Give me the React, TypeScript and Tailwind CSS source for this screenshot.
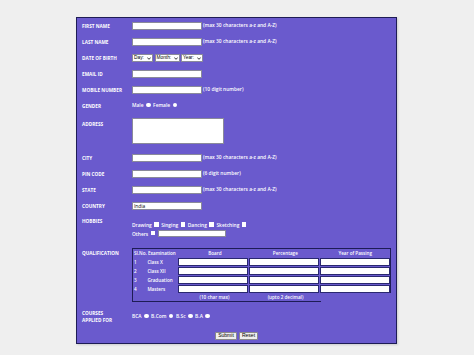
import React from "react";

const font = { fontFamily: '"Open Sans", "Liberation Sans", sans-serif' };

function Label({ children }: { children: React.ReactNode }) {
  return <div className="w-[50px] shrink-0 text-[4.7px] font-bold uppercase leading-[7px] text-white">{children}</div>;
}

function TextBox({ value = "", w = "w-[70px]" }: { value?: string; w?: string }) {
  return (
    <div className={`${w} h-[8px] border border-[#8a8a9a] bg-white px-[1px] text-[4.8px] leading-[6px] text-black`}>
      {value}
    </div>
  );
}

function Hint({ children }: { children: React.ReactNode }) {
  return <span className="ml-[1px] text-[4.9px] font-semibold text-white">{children}</span>;
}

function Select({ text, w }: { text: string; w: string }) {
  return (
    <div className={`${w} flex h-[8px] items-center justify-between border border-[#8a8a9a] bg-white px-[1px] text-[4.8px] leading-[6px] text-black`}>
      <span style={{ fontFamily: '"Liberation Sans", sans-serif' }}>{text}</span>
      <svg width="4" height="3" viewBox="0 0 4 3">
        <path d="M0.3 0.5 L2 2.3 L3.7 0.5" fill="none" stroke="#222" strokeWidth="0.9" />
      </svg>
    </div>
  );
}

const Radio = () => <span className="mx-[2.5px] mb-[1.5px] inline-block h-[4.5px] w-[4.5px] rounded-full bg-white" />;
const Check = () => <span className="mx-[2.5px] mb-[1px] inline-block h-[4.5px] w-[4.5px] bg-white" />;

function Row({ label, h = "h-[16px]", children }: { label: React.ReactNode; h?: string; children?: React.ReactNode }) {
  return (
    <div className={`flex ${h} items-center`}>
      <Label>{label}</Label>
      <div className="flex items-center">{children}</div>
    </div>
  );
}

const rows = [
  ["1", "Class X"],
  ["2", "Class XII"],
  ["3", "Graduation"],
  ["4", "Masters"],
];

function CellInput() {
  return <div className="h-[8px] w-[70px] border border-[#2a2870] bg-white" />;
}

export default function App() {
  return (
    <div className="h-[355px] w-[474px] bg-[#efefef] pt-[17px]" style={font}>
      <div className="ml-[76px] h-[327px] w-[321px] border border-[#1e1c55] bg-[#6a5acd] pl-[5px] text-white shadow-[1px_1px_2px_rgba(0,0,0,0.15)]">
        <Row label="First Name">
          <TextBox />
          <Hint>(max 30 characters a-z and A-Z)</Hint>
        </Row>
        <Row label="Last Name">
          <TextBox />
          <Hint>(max 30 characters a-z and A-Z)</Hint>
        </Row>
        <Row label="Date of Birth">
          <div className="flex gap-[1.5px]">
            <Select text="Day:" w="w-[21px]" />
            <Select text="Month:" w="w-[25px]" />
            <Select text="Year:" w="w-[22px]" />
          </div>
        </Row>
        <Row label="Email ID">
          <TextBox />
        </Row>
        <Row label="Mobile Number">
          <TextBox />
          <Hint>(10 digit number)</Hint>
        </Row>
        <Row label="Gender">
          <span className="text-[4.9px] font-semibold">Male</span>
          <Radio />
          <span className="text-[4.9px] font-semibold">Female</span>
          <Radio />
        </Row>
        <div className="flex h-[36px] items-start">
          <div className="pt-[7px]">
            <Label>Address</Label>
          </div>
          <div className="mt-[4px] h-[26px] w-[92px] border border-[#8a8a9a] bg-white" />
        </div>
        <Row label="City">
          <TextBox />
          <Hint>(max 30 characters a-z and A-Z)</Hint>
        </Row>
        <Row label="Pin Code">
          <TextBox />
          <Hint>(6 digit number)</Hint>
        </Row>
        <Row label="State">
          <TextBox />
          <Hint>(max 30 characters a-z and A-Z)</Hint>
        </Row>
        <Row label="Country">
          <TextBox value="India" />
        </Row>
        <div className="flex h-[27px] items-start">
          <div className="pt-[4px]">
            <Label>Hobbies</Label>
          </div>
          <div className="pt-[8px] text-[4.9px] font-semibold leading-[6px]">
            <div className="flex items-center">
              Drawing <Check /> Singing <Check /> Dancing <Check /> Sketching <Check />
            </div>
            <div className="mt-[2px] flex items-center">
              Others <Check />
              <div className="h-[7px] w-[68px] border border-[#8a8a9a] bg-white" />
            </div>
          </div>
        </div>
        <div className="flex h-[64px] items-start">
          <div className="pt-[9px]">
            <Label>Qualification</Label>
          </div>
          <div className="mt-[7px] text-[4.6px] font-semibold leading-[6px]">
            <div className="w-[259px] border-x border-t border-[#1e1c55]">
              <div className="flex h-[8px] items-center">
                <span className="w-[15px] pl-[1px]">Sl.No.</span>
                <span className="w-[32px]">Examination</span>
                <span className="w-[71px] text-center">Board</span>
                <span className="w-[71px] text-center">Percentage</span>
                <span className="w-[70px] text-center">Year of Passing</span>
              </div>
              {rows.map(([n, e]) => (
                <div key={n} className="flex h-[9px] items-center">
                  <span className="w-[15px] pl-[1px]">{n}</span>
                  <span className="w-[32px]">{e}</span>
                  <div className="flex gap-[1px]">
                    <CellInput />
                    <CellInput />
                    <CellInput />
                  </div>
                </div>
              ))}
            </div>
            <div className="flex h-[9px] w-[189px] items-center border-b border-l border-[#1e1c55]">
              <span className="w-[46px]" />
              <span className="w-[71px] text-center">(10 char max)</span>
              <span className="w-[71px] text-center">(upto 2 decimal)</span>
            </div>
          </div>
        </div>
        <div className="flex h-[24px] items-center">
          <Label>
            Courses
            <br />
            Applied For
          </Label>
          <div className="flex items-center text-[4.9px] font-semibold">
            BCA <Radio /> B.Com <Radio /> B.Sc <Radio /> B.A <Radio />
          </div>
        </div>
        <div className="flex justify-center gap-[2px] pr-[5px] pt-[3px]" style={{ fontFamily: '"Liberation Sans", sans-serif' }}>
          <div className="flex h-[8px] w-[22px] items-center justify-center rounded-[1px] border border-[#8a8a8a] bg-[#efefef] text-[5px] text-black">
            Submit
          </div>
          <div className="flex h-[8px] w-[19px] items-center justify-center rounded-[1px] border border-[#8a8a8a] bg-[#efefef] text-[5px] text-black">
            Reset
          </div>
        </div>
      </div>
    </div>
  );
}
